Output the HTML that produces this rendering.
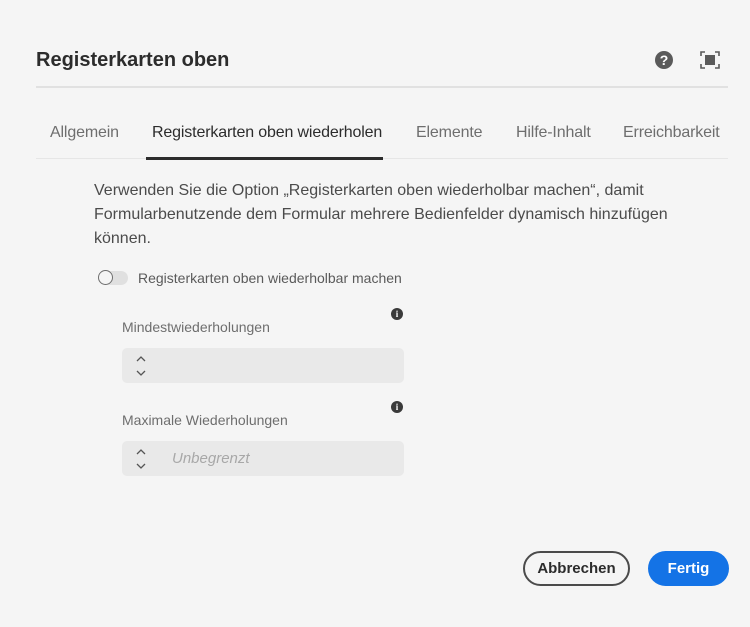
<!DOCTYPE html>
<html><head><style>
body{margin:0;width:750px;height:627px;background:#f5f5f5;font-family:"Liberation Sans",sans-serif;position:relative;overflow:hidden;color:#4b4b4b}
.a{position:absolute;white-space:nowrap}
.tab{position:absolute;top:124px;font-size:16px;color:#6e6e6e;letter-spacing:-0.15px}
.inp{position:absolute;left:122px;width:282px;height:35px;background:#e9e9e9;border-radius:5px}
.info{position:absolute;width:12px;height:12px;border-radius:50%;background:#3a3a3a;color:#fff;font-size:9px;font-weight:bold;text-align:center;line-height:12px;font-family:"Liberation Serif",serif}
</style></head><body>
<div class="a" style="left:36px;top:49px;font-size:20px;font-weight:bold;color:#2c2c2c">Registerkarten oben</div>
<div class="a" style="left:655px;top:51px;width:18px;height:18px;border-radius:50%;background:#5a5a5a;color:#fff;font-size:14px;font-weight:bold;text-align:center;line-height:18px">?</div>
<svg class="a" style="left:700px;top:51px" width="20" height="18" viewBox="0 0 20 18"><path d="M1 5V1h4M15 1h4v4M19 13v4h-4M5 17H1v-4" fill="none" stroke="#5a5a5a" stroke-width="1.6"/><rect x="5" y="4" width="10" height="10" fill="#5a5a5a"/></svg>
<div class="a" style="left:36px;top:86px;width:692px;height:2px;background:#e1e1e1"></div>
<div class="tab" style="left:50px">Allgemein</div>
<div class="tab" style="left:152px;color:#2c2c2c">Registerkarten oben wiederholen</div>
<div class="tab" style="left:416px">Elemente</div>
<div class="tab" style="left:516px">Hilfe-Inhalt</div>
<div class="tab" style="left:623px">Erreichbarkeit</div>
<div class="a" style="left:36px;top:158px;width:692px;height:1px;background:#e6e6e6"></div>
<div class="a" style="left:146px;top:157px;width:237px;height:3px;background:#2c2c2c"></div>
<div class="a" style="left:94px;top:179px;font-size:16px;line-height:24px;color:#4b4b4b;white-space:normal;width:600px">Verwenden Sie die Option „Registerkarten oben wiederholbar machen“, damit Formularbenutzende dem Formular mehrere Bedienfelder dynamisch hinzufügen können.</div>
<div class="a" style="left:98px;top:271px;width:30px;height:14px;border-radius:7px;background:#e0e0e0"></div>
<div class="a" style="left:98px;top:270px;width:13px;height:13px;border-radius:50%;border:1.5px solid #6e6e6e;background:#f5f5f5"></div>
<div class="a" style="left:138px;top:270px;font-size:14px;color:#5a5a5a">Registerkarten oben wiederholbar machen</div>
<div class="a" style="left:122px;top:319px;font-size:14px;color:#6e6e6e">Mindestwiederholungen</div>
<div class="info" style="left:391px;top:308px">i</div>
<div class="inp" style="top:348px"></div>
<svg class="a" style="left:135px;top:355px" width="12" height="22"><path d="M2 6l4-4 4 4M2 16l4 4 4-4" fill="none" stroke="#555" stroke-width="1.3"/></svg>
<div class="a" style="left:122px;top:412px;font-size:14px;color:#6e6e6e">Maximale Wiederholungen</div>
<div class="info" style="left:391px;top:401px">i</div>
<div class="inp" style="top:441px"></div>
<svg class="a" style="left:135px;top:448px" width="12" height="22"><path d="M2 6l4-4 4 4M2 16l4 4 4-4" fill="none" stroke="#555" stroke-width="1.3"/></svg>
<div class="a" style="left:172px;top:450px;font-size:15px;font-style:italic;color:#a8a8a8">Unbegrenzt</div>
<div class="a" style="left:523px;top:551px;width:103px;height:31px;border:2px solid #4b4b4b;border-radius:18px;text-align:center;line-height:31px;font-size:15px;font-weight:bold;color:#2c2c2c">Abbrechen</div>
<div class="a" style="left:648px;top:551px;width:81px;height:35px;background:#1473e6;border-radius:18px;text-align:center;line-height:35px;font-size:15px;font-weight:bold;color:#fff">Fertig</div>
</body></html>
